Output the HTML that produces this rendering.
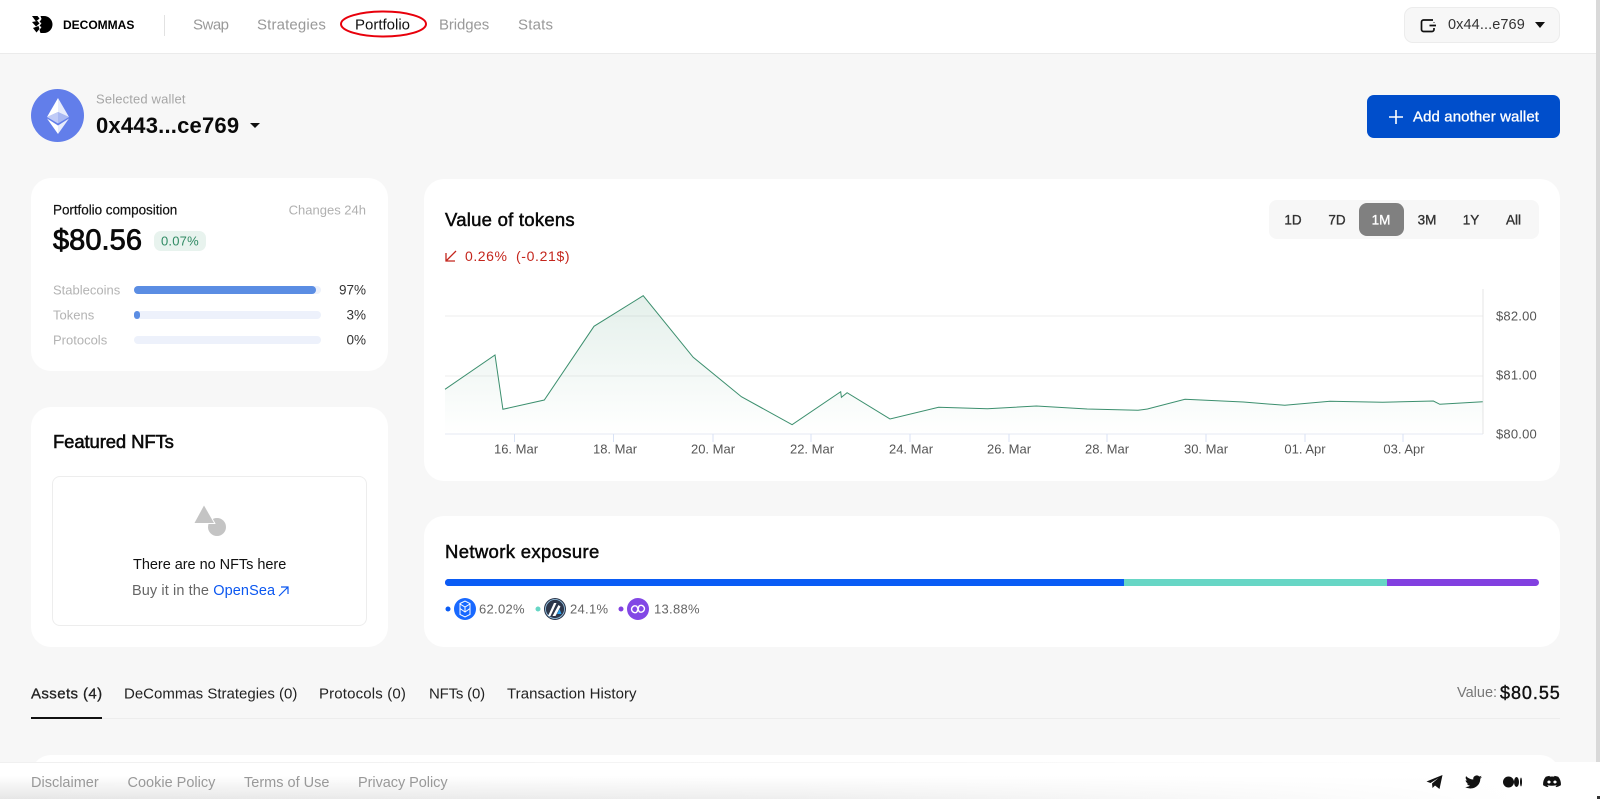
<!DOCTYPE html>
<html lang="en">
<head>
<meta charset="utf-8">
<title>DeCommas Portfolio</title>
<style>
*{box-sizing:border-box;margin:0;padding:0}
html,body{width:1600px;height:799px;overflow:hidden;background:#f7f7f7;font-family:"Liberation Sans",sans-serif;color:#000}
#p{position:relative;width:1600px;height:799px;overflow:hidden}
.b{position:absolute}
.t{position:absolute;white-space:nowrap;line-height:1;transform:translateY(-50%)}
.m{-webkit-text-stroke:.3px currentColor}
.c{background:#fff;border-radius:20px}
.n{font-size:15px;color:#999;top:25px}
.l{font-size:13px;color:#b3b3b3}
.v{font-size:13.5px;color:#333;right:1234px}
.bar{height:8px;left:134px;width:187px;background:#edf1fb;border-radius:4px}
.bar i{display:block;height:8px;background:#5b8de3;border-radius:4px}
.tm{font-size:13.5px;color:#333;transform:translate(-50%,-50%);top:220px;-webkit-text-stroke:.35px currentColor}
.x{font-size:13px;color:#555;top:449px;transform:translate(-50%,-50%)}
.y{font-size:13px;color:#555;left:1496px;letter-spacing:.2px}
.tb{font-size:15px;color:#222;top:694px}
.f{font-size:14.5px;color:#999;top:783px}
.g{font-size:13px;color:#666;top:609px;letter-spacing:.3px}
</style>
</head>
<body>
<div id="p">
  <!-- scrollbar -->
  <div class="b" style="left:1596px;top:0;width:4px;height:762px;background:#d9d9d9"></div>

  <!-- header -->
  <div class="b" style="left:0;top:0;width:1596px;height:54px;background:#fff;border-bottom:1px solid #ebebeb"></div>
  <svg class="b" style="left:30px;top:14px" width="24" height="22" viewBox="0 0 24 22">
    <path d="M10.500 2h3.500a8.500 8.500 0 0 1 0 17h-3.500l-1-3 2-3-2-1 2-3-2-1 2-3z" fill="#000"/>
    <path d="M2 2h5.500l2 2.500-3.500 3zM2 8l5.500-1 2 2.500-3.500 3zM3 14l5.500-2 1 3-3 3.500z" fill="#000"/>
  </svg>
  <span class="t" style="left:63px;top:25px;font-size:12px;font-weight:bold">DECOMMAS</span>
  <div class="b" style="left:164px;top:15px;width:1px;height:21px;background:#e2e2e2"></div>
  <span class="t n" style="left:193px;letter-spacing:-.5px">Swap</span>
  <span class="t n" style="left:257px;letter-spacing:.15px">Strategies</span>
  <span class="t n" style="left:355px;color:#111">Portfolio</span>
  <span class="t n" style="left:439px;letter-spacing:-.1px">Bridges</span>
  <span class="t n" style="left:518px;letter-spacing:.2px">Stats</span>
  <svg class="b" style="left:338px;top:9px" width="92" height="30"><ellipse cx="45.500" cy="15" rx="42.500" ry="12.500" fill="none" stroke="#e8000b" stroke-width="2"/></svg>

  <div class="b" style="left:1404px;top:7px;width:156px;height:36px;background:#f7f7f7;border:1px solid #ececec;border-radius:9px"></div>
  <svg class="b" style="left:1420px;top:18px" width="17" height="15" viewBox="0 0 17 15" fill="none" stroke="#111" stroke-width="1.700"><path d="M13 2H3.500A2 2 0 0 0 1.500 4v7.500a2 2 0 0 0 2 2H12a2 2 0 0 0 2-2V10"/><path d="M14 5V4.500M9.500 7.500h6.500"/></svg>
  <span class="t" style="left:1448px;top:25px;font-size:14.500px;color:#333;letter-spacing:.1px">0x44...e769</span>
  <svg class="b" style="left:1535px;top:22px" width="10" height="6"><path d="M0 0h10L5 6z" fill="#111"/></svg>

  <!-- wallet -->
  <div class="b" style="left:31px;top:89px;width:53px;height:53px;border-radius:50%;background:#627eea"></div>
  <svg class="b" style="left:46px;top:97px" width="24" height="38" viewBox="0 0 24 38">
    <path d="M12 1v14l11 5z" fill="#fff" fill-opacity=".85"/>
    <path d="M12 1L1 20l11-5z" fill="#fff"/>
    <path d="M12 15v11.500L23 20z" fill="#fff" fill-opacity=".45"/>
    <path d="M12 15L1 20l11 6.500z" fill="#fff" fill-opacity=".6"/>
    <path d="M12 28.500V37l11-15.500z" fill="#fff" fill-opacity=".85"/>
    <path d="M12 28.500L1 21.500 12 37z" fill="#fff"/>
  </svg>
  <span class="t" style="left:96px;top:99px;font-size:13px;color:#a6a6a6;letter-spacing:.15px">Selected wallet</span>
  <span class="t" style="left:96px;top:126px;font-size:22px;font-weight:bold;color:#0a0a0a;letter-spacing:.2px">0x443...ce769</span>
  <svg class="b" style="left:250px;top:123px" width="10" height="5"><path d="M0 0h10L5 5z" fill="#111"/></svg>

  <div class="b" style="left:1367px;top:95px;width:193px;height:43px;background:#004ecb;border-radius:7px"></div>
  <svg class="b" style="left:1389px;top:110px" width="14" height="14"><path d="M7 0v14M0 7h14" stroke="#fff" stroke-width="1.600"/></svg>
  <span class="t m" style="left:1413px;top:117px;font-size:15px;color:#fff;letter-spacing:.1px">Add another wallet</span>

  <!-- composition -->
  <div class="b c" style="left:31px;top:178px;width:357px;height:193px"></div>
  <span class="t m" style="left:53px;top:210px;font-size:13.500px;color:#111;letter-spacing:-.05px;-webkit-text-stroke-width:.2px">Portfolio composition</span>
  <span class="t" style="right:1234px;top:210px;font-size:13px;color:#b0b0b0">Changes 24h</span>
  <span class="t m" style="left:53px;top:241px;font-size:29px;color:#0a0a0a;letter-spacing:.05px;-webkit-text-stroke-width:.85px">$80.56</span>
  <div class="b" style="left:154px;top:231px;width:52px;height:20px;background:#e8f3ee;border-radius:7px"></div>
  <span class="t" style="left:161px;top:241px;font-size:13px;color:#2f8a63;letter-spacing:.2px">0.07%</span>
  <span class="t l" style="left:53px;top:290px">Stablecoins</span>
  <div class="b bar" style="top:286px"><i style="width:182px"></i></div>
  <span class="t v" style="top:290px">97%</span>
  <span class="t l" style="left:53px;top:315px">Tokens</span>
  <div class="b bar" style="top:311px"><i style="width:6px"></i></div>
  <span class="t v" style="top:315px">3%</span>
  <span class="t l" style="left:53px;top:340px">Protocols</span>
  <div class="b bar" style="top:336px"></div>
  <span class="t v" style="top:340px">0%</span>

  <!-- NFTs -->
  <div class="b c" style="left:31px;top:407px;width:357px;height:240px"></div>
  <span class="t m" style="left:53px;top:442px;font-size:18.500px;color:#0a0a0a;letter-spacing:-.12px;-webkit-text-stroke-width:.55px">Featured NFTs</span>
  <div class="b" style="left:52px;top:476px;width:315px;height:150px;border:1px solid #ededed;border-radius:8px"></div>
  <svg class="b" style="left:192px;top:503px" width="36" height="36">
    <circle cx="25" cy="24" r="9" fill="#c4c4c4"/>
    <path d="M2.500 20L12 2.500 22 20z" fill="#c4c4c4" stroke="#fff" stroke-width="2" paint-order="stroke"/>
  </svg>
  <span class="t" style="left:133px;top:565px;font-size:14.500px;color:#111;letter-spacing:-.03px">There are no NFTs here</span>
  <span class="t" style="left:132px;top:591px;font-size:14.500px;color:#666;letter-spacing:.1px">Buy it in the <span style="color:#0b57f0">OpenSea</span></span>
  <svg class="b" style="left:278px;top:586px" width="11" height="11" fill="none" stroke="#0b57f0" stroke-width="1.200"><path d="M1 10L10 1M3 1h7v7"/></svg>

  <!-- chart card -->
  <div class="b c" style="left:424px;top:179px;width:1136px;height:302px"></div>
  <span class="t m" style="left:445px;top:220px;font-size:18.500px;color:#0a0a0a;letter-spacing:.25px;-webkit-text-stroke-width:.5px">Value of tokens</span>
  <svg class="b" style="left:445px;top:250px" width="12" height="12" fill="none" stroke="#c4261d" stroke-width="1.300"><path d="M11 1L1 11M1 3v8h9"/></svg>
  <span class="t" style="left:465px;top:256px;font-size:14px;color:#c4261d;letter-spacing:.55px">0.26%</span>
  <span class="t" style="left:516px;top:256px;font-size:14px;color:#c4261d;letter-spacing:.65px">(-0.21$)</span>

  <div class="b" style="left:1269px;top:200px;width:270px;height:39px;background:#f7f7f7;border-radius:8px"></div>
  <div class="b" style="left:1359px;top:203px;width:45px;height:33px;background:#808080;border-radius:8px"></div>
  <span class="t tm" style="left:1293px">1D</span>
  <span class="t tm" style="left:1337px">7D</span>
  <span class="t tm" style="left:1381px;color:#fff">1M</span>
  <span class="t tm" style="left:1427px">3M</span>
  <span class="t tm" style="left:1471px">1Y</span>
  <span class="t tm" style="left:1513.500px">All</span>

  <svg class="b" style="left:0;top:0" width="1600" height="799">
    <defs>
      <linearGradient id="a" gradientUnits="userSpaceOnUse" x1="0" y1="296" x2="0" y2="434">
        <stop offset="0" stop-color="#2f8a63" stop-opacity=".13"/>
        <stop offset="1" stop-color="#2f8a63" stop-opacity="0"/>
      </linearGradient>
    </defs>
    <path d="M445 316H1483M445 376H1483" stroke="#f1f1f1" stroke-width="1.300"/>
    <path d="M445 434H1483" stroke="#e6eaf3" stroke-width="1"/>
    <path d="M1483 289V434" stroke="#e4e4e4" stroke-width="1"/>
    <path d="M514.500 434v8M613.500 434v8M713 434v8M811 434v8M910 434v8M1009 434v8M1107 434v8M1206 434v8M1305 434v8M1403 434v8" stroke="#d8e2f5" stroke-width="1"/>
    <path d="M445 389.300L495 355L502.900 409.300L544.300 400L594 326.300L643.200 295.700L693.200 357.300L741.400 396.700L792.100 424.700L840.700 391.700L841.400 397.300L847.100 392.700L890 419L938.600 407.300L987.500 408.700L1036.400 406L1087.200 409L1138 410.300L1147.400 409L1185 399.300L1243.400 402L1284.800 405.300L1330 401.300L1382.600 402.300L1433.400 401L1439.800 404.300L1482.700 401.700V434H445Z" fill="url(#a)"/>
    <path d="M445 389.300L495 355L502.900 409.300L544.300 400L594 326.300L643.200 295.700L693.200 357.300L741.400 396.700L792.100 424.700L840.700 391.700L841.400 397.300L847.100 392.700L890 419L938.600 407.300L987.500 408.700L1036.400 406L1087.200 409L1138 410.300L1147.400 409L1185 399.300L1243.400 402L1284.800 405.300L1330 401.300L1382.600 402.300L1433.400 401L1439.800 404.300L1482.700 401.700" fill="none" stroke="#3c8f6e" stroke-width="1"/>
  </svg>
  <span class="t x" style="left:516px">16. Mar</span>
  <span class="t x" style="left:615px">18. Mar</span>
  <span class="t x" style="left:713px">20. Mar</span>
  <span class="t x" style="left:812px">22. Mar</span>
  <span class="t x" style="left:911px">24. Mar</span>
  <span class="t x" style="left:1009px">26. Mar</span>
  <span class="t x" style="left:1107px">28. Mar</span>
  <span class="t x" style="left:1206px">30. Mar</span>
  <span class="t x" style="left:1305px">01. Apr</span>
  <span class="t x" style="left:1404px">03. Apr</span>
  <span class="t y" style="top:316px">$82.00</span>
  <span class="t y" style="top:374.500px">$81.00</span>
  <span class="t y" style="top:433.500px">$80.00</span>

  <!-- network -->
  <div class="b c" style="left:424px;top:516px;width:1136px;height:131px"></div>
  <span class="t m" style="left:445px;top:552px;font-size:18.500px;color:#0a0a0a;letter-spacing:.35px;-webkit-text-stroke-width:.5px">Network exposure</span>
  <div class="b" style="left:445px;top:579px;width:1094px;height:7px;border-radius:4px;overflow:hidden;background:#8240e0">
    <div class="b" style="left:0;top:0;width:679px;height:7px;background:#0a5cf5"></div>
    <div class="b" style="left:679px;top:0;width:263px;height:7px;background:#67d6c5"></div>
  </div>
  <svg class="b" style="left:440px;top:595px" width="270" height="28">
    <circle cx="8" cy="14" r="2.500" fill="#0a5cf5"/>
    <circle cx="25" cy="14" r="11" fill="#1969ff"/>
    <path d="M20 8.500l5-2.500 5 2.500v11l-5 2.500-5-2.500zM20 9l5 3 5-3M25 12v5M20 13.500l5 3.500 5-3.500" fill="none" stroke="#fff" stroke-width="1"/>
    <circle cx="98" cy="14" r="2.500" fill="#67d6c5"/>
    <circle cx="115" cy="14" r="11" fill="#2d374b"/>
    <circle cx="115" cy="14" r="9.500" fill="none" stroke="#9dcced" stroke-width=".8"/>
    <path d="M108 21l6-13h2.500l-6 13zM112.500 21l6-11 2 1.500-5 9.500z" fill="#fff"/>
    <path d="M117 19l2.500-5 2 5z" fill="#28a0f0"/>
    <circle cx="181" cy="14" r="2.500" fill="#8240e0"/>
    <circle cx="198" cy="14" r="11" fill="#8247e5"/>
    <path d="M197 11.500a3.400 3.400 0 1 0 0 5.500M199 11a3.400 3.400 0 1 1 0 5.500M197 11.500l2 5M199 11l-2 6" fill="none" stroke="#fff" stroke-width="1.500"/>
  </svg>
  <span class="t g" style="left:479px">62.02%</span>
  <span class="t g" style="left:570px">24.1%</span>
  <span class="t g" style="left:654px">13.88%</span>

  <!-- tabs -->
  <span class="t tb m" style="left:31px;letter-spacing:.4px">Assets (4)</span>
  <span class="t tb" style="left:124px;letter-spacing:0">DeCommas Strategies (0)</span>
  <span class="t tb" style="left:319px;letter-spacing:.15px">Protocols (0)</span>
  <span class="t tb" style="left:429px;letter-spacing:-.2px">NFTs (0)</span>
  <span class="t tb" style="left:507px;letter-spacing:.05px">Transaction History</span>
  <div class="b" style="left:31px;top:718px;width:1529px;height:1px;background:#ededed"></div>
  <div class="b" style="left:31px;top:717px;width:71px;height:2px;background:#111"></div>
  <span class="t" style="left:1457px;top:693px;font-size:14.500px;color:#777">Value:</span>
  <span class="t m" style="left:1500px;top:693px;font-size:18px;color:#111;letter-spacing:.95px;-webkit-text-stroke-width:.4px">$80.55</span>

  <!-- next card peeking -->
  <div class="b c" style="left:31px;top:755px;width:1529px;height:40px"></div>

  <!-- footer -->
  <div class="b" style="left:0;top:762px;width:1600px;height:37px;background:linear-gradient(to bottom,#fff 0,#fff 35%,#e6e6e6 100%);border-top:1px solid #f0f0f0"></div>
  <div class="b" style="left:0;top:762px;width:1600px;height:37px;background:linear-gradient(to right,rgba(255,255,255,0) 0,rgba(255,255,255,.35) 50%,#fff 95%)"></div>
  <span class="t f" style="left:31px">Disclaimer</span>
  <span class="t f" style="left:127.500px">Cookie Policy</span>
  <span class="t f" style="left:244px">Terms of Use</span>
  <span class="t f" style="left:358px;letter-spacing:-.05px">Privacy Policy</span>
  <svg class="b" style="left:1426px;top:774px" width="17" height="16" viewBox="0 0 17 16"><path d="M.5 7.500L16.500 1 13.500 15 9 11.500 6.500 14 6 9.500 12.500 4 4.500 9z" fill="#111"/></svg>
  <svg class="b" style="left:1465px;top:774px" width="17" height="16" viewBox="0 0 24 24" preserveAspectRatio="none"><path d="M23.950 4.570a10 10 0 0 1-2.820.77 4.960 4.960 0 0 0 2.160-2.720c-.95.55-2 .95-3.120 1.180a4.920 4.920 0 0 0-8.380 4.480C7.690 8.090 4.070 6.130 1.640 3.160a4.900 4.900 0 0 0 1.520 6.570 4.900 4.900 0 0 1-2.230-.61v.06a4.930 4.930 0 0 0 3.950 4.830 4.900 4.900 0 0 1-2.210.08 4.940 4.940 0 0 0 4.600 3.420A9.870 9.870 0 0 1 0 19.540a13.940 13.940 0 0 0 7.550 2.210c9.060 0 14-7.500 14-13.980 0-.21 0-.42-.02-.63a10 10 0 0 0 2.460-2.550z" fill="#111"/></svg>
  <svg class="b" style="left:1503px;top:775px" width="19" height="14"><ellipse cx="5.500" cy="7" rx="5.500" ry="5.500" fill="#111"/><ellipse cx="13.500" cy="7" rx="2.500" ry="5" fill="#111"/><ellipse cx="18" cy="7" rx="1" ry="4.500" fill="#111"/></svg>
  <svg class="b" style="left:1543px;top:774px" width="18" height="15" viewBox="0 0 24 24" preserveAspectRatio="none"><path d="M20.300 4.400A19.800 19.800 0 0 0 15.400 2.900l-.6 1.300a18.400 18.400 0 0 0-5.600 0l-.6-1.300a19.700 19.700 0 0 0-4.900 1.500C.6 9-.2 13.500.2 17.900a20 20 0 0 0 6 3l1.300-2a13 13 0 0 1-2-1l.5-.4a14.200 14.200 0 0 0 12 0l.5.4a13 13 0 0 1-2 1l1.300 2a20 20 0 0 0 6-3c.5-5.100-.8-9.500-3.500-13.500zM8 15.200c-1.200 0-2.200-1.100-2.200-2.400S6.800 10.400 8 10.400s2.200 1.100 2.200 2.400-1 2.400-2.200 2.400zm8 0c-1.200 0-2.200-1.100-2.200-2.400s1-2.400 2.200-2.400 2.200 1.100 2.200 2.400-1 2.400-2.200 2.400z" fill="#111"/></svg>
  <div class="b" style="left:1597px;top:796px;width:3px;height:3px;background:#333"></div>
</div>
</body>
</html>
